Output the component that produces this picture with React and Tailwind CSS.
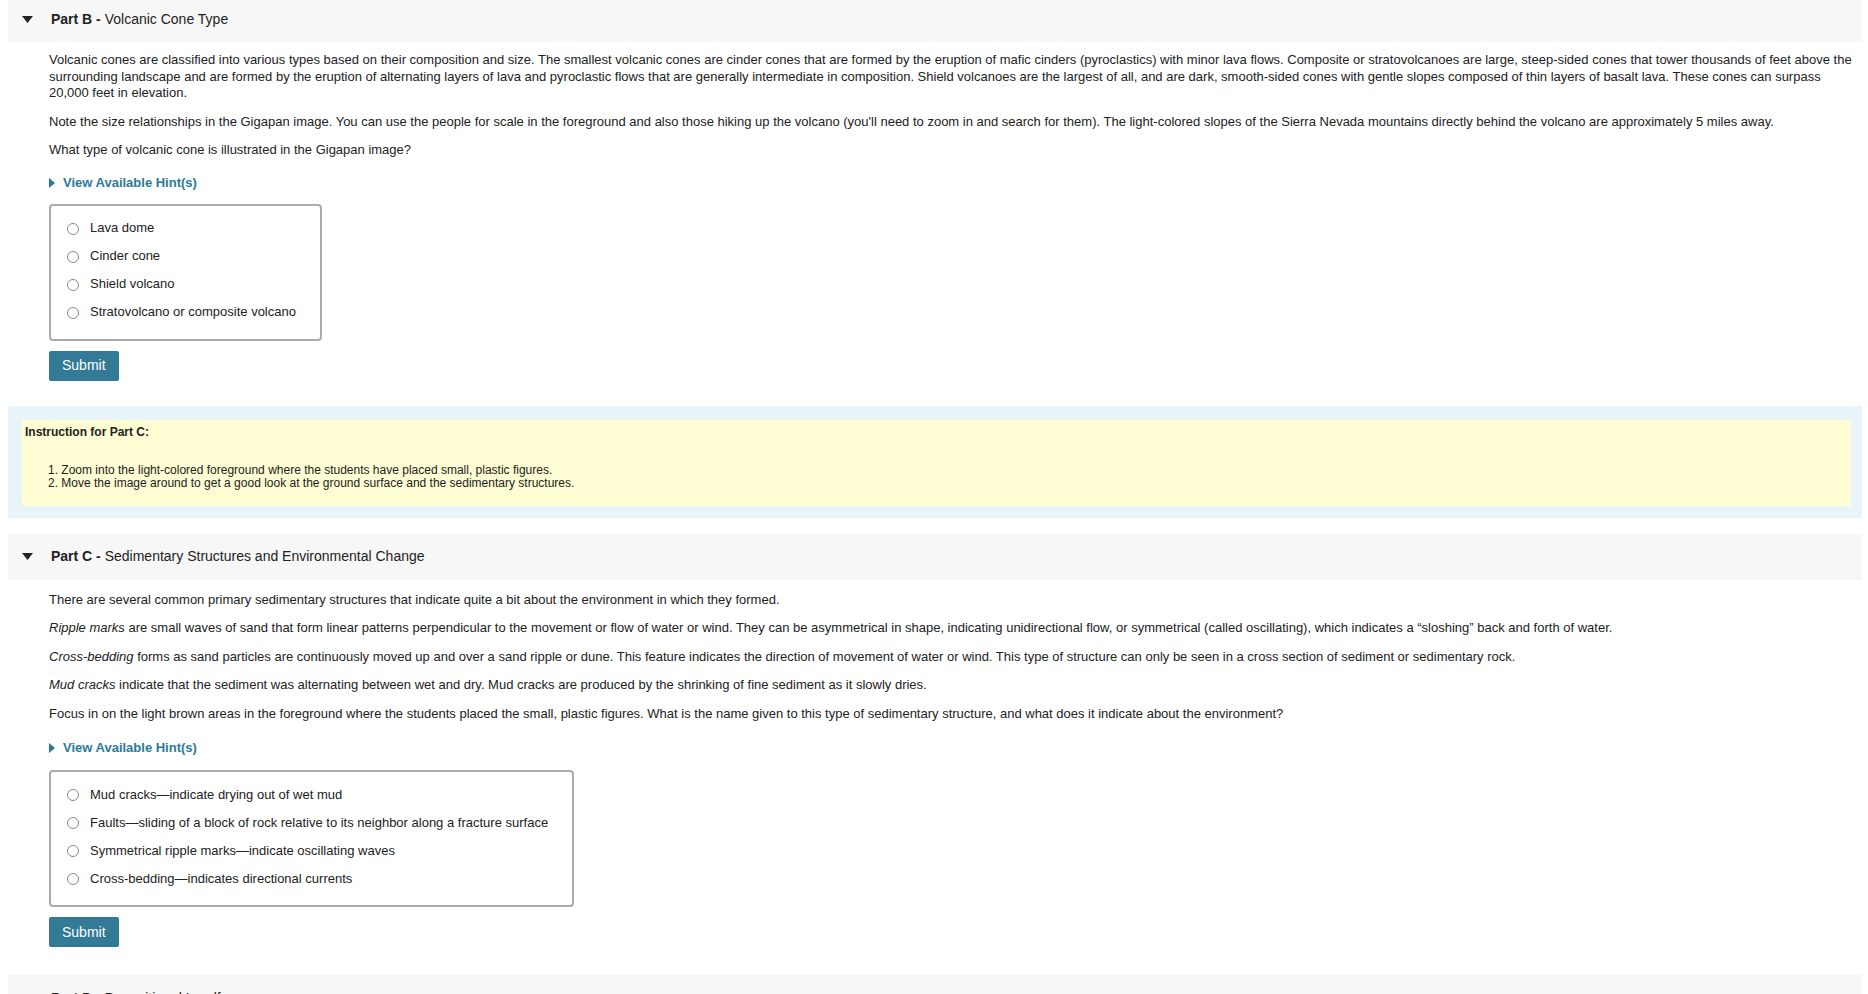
import React from 'react';

const partBOptions = [
    'Lava dome',
    'Cinder cone',
    'Shield volcano',
    'Stratovolcano or composite volcano',
];

const partCOptions = [
    'Mud cracks\u2014indicate drying out of wet mud',
    'Faults\u2014sliding of a block of rock relative to its neighbor along a fracture surface',
    'Symmetrical ripple marks\u2014indicate oscillating waves',
    'Cross-bedding\u2014indicates directional currents',
];

const Caret = () => (
    <svg width="11" height="7" viewBox="0 0 11 7" className="shrink-0">
        <polygon points="0,0 11,0 5.5,7" fill="#222" />
    </svg>
);

const PartHeader = ({ part, title }) => (
    <div className="h-[46px] bg-[#f7f7f7] flex items-center pl-[14px]">
        <Caret />
        <h2 className="ml-[18px] text-[14px] text-[#222]">
            <span className="font-bold">{part} - </span>
            {title}
        </h2>
    </div>
);

const HintToggle = ({ top = 'mt-[16px]' }) => (
    <button className={`${top} flex items-center gap-[8px] text-[13px] font-bold text-[#2c7a9a] leading-[16px]`}>
        <svg width="6" height="10" viewBox="0 0 6 10">
            <polygon points="0,0 6,5 0,10" fill="#2c7a9a" />
        </svg>
        View Available Hint(s)
    </button>
);

const Choices = ({ options, top = 'mt-[13px]' }) => (
    <div className={`${top} w-fit border-2 border-[#aaaaaa] rounded-[4px] pt-[9px] pb-[12px] pl-[16px] pr-[24px]`}>
        {options.map(opt => (
            <label key={opt} className="h-[28px] flex items-center gap-[11px] text-[13px] text-[#222] whitespace-nowrap">
                <span className="w-[12px] h-[12px] rounded-full border border-[#8a8a8a] bg-white shrink-0" />
                {opt}
            </label>
        ))}
    </div>
);

const SubmitButton = () => (
    <button className="mt-[10px] h-[30px] px-[13px] bg-[#337a96] text-white text-[14px] rounded-[2px]">
        Submit
    </button>
);

export default function App() {
    return (
        <div className="min-h-screen bg-white overflow-hidden font-['Liberation_Sans',Arial,sans-serif] text-[#222]">
            <div className="pl-[8px] pr-[6px] -mt-[4px]">
                {/* Part B */}
                <section>
                    <PartHeader part="Part B" title="Volcanic Cone Type" />
                    <div className="pl-[41px] pr-[10px] pt-[10px] text-[13px] leading-[16.5px]">
                        <p className="mb-[12px]">
                            Volcanic cones are classified into various types based on their composition and size. The smallest volcanic cones are cinder cones that are formed by the eruption of mafic cinders (pyroclastics) with minor lava flows. Composite or stratovolcanoes are large, steep-sided cones that tower thousands of feet above the surrounding landscape and are formed by the eruption of alternating layers of lava and pyroclastic flows that are generally intermediate in composition. Shield volcanoes are the largest of all, and are dark, smooth-sided cones with gentle slopes composed of thin layers of basalt lava. These cones can surpass 20,000 feet in elevation.
                        </p>
                        <p className="mb-[12px]">
                            Note the size relationships in the Gigapan image. You can use the people for scale in the foreground and also those hiking up the volcano (you'll need to zoom in and search for them). The light-colored slopes of the Sierra Nevada mountains directly behind the volcano are approximately 5 miles away.
                        </p>
                        <p>What type of volcanic cone is illustrated in the Gigapan image?</p>
                        <HintToggle />
                        <Choices options={partBOptions} />
                        <SubmitButton />
                    </div>
                </section>

                {/* Instruction for Part C */}
                <div className="mt-[25px] bg-[#e8f4f7] pt-[14px] pb-[12px] pl-[14px] pr-[11px]">
                    <div className="bg-[#fefdd3] pl-[3px] pt-[5px] pb-[16px] text-[12px] text-[#222]">
                        <p className="font-bold leading-[15px]">Instruction for Part C:</p>
                        <ol className="mt-[24px] pl-[23px] leading-[13px]">
                            <li>1. Zoom into the light-colored foreground where the students have placed small, plastic figures.</li>
                            <li>2. Move the image around to get a good look at the ground surface and the sedimentary structures.</li>
                        </ol>
                    </div>
                </div>

                {/* Part C */}
                <section className="mt-[16px]">
                    <PartHeader part="Part C" title="Sedimentary Structures and Environmental Change" />
                    <div className="pl-[41px] pr-[10px] pt-[12px] text-[13px] leading-[16.5px]">
                        <p className="mb-[12px]">
                            There are several common primary sedimentary structures that indicate quite a bit about the environment in which they formed.
                        </p>
                        <p className="mb-[12px]">
                            <em>Ripple marks</em> are small waves of sand that form linear patterns perpendicular to the movement or flow of water or wind. They can be asymmetrical in shape, indicating unidirectional flow, or symmetrical (called oscillating), which indicates a “sloshing” back and forth of water.
                        </p>
                        <p className="mb-[12px]">
                            <em>Cross-bedding</em> forms as sand particles are continuously moved up and over a sand ripple or dune. This feature indicates the direction of movement of water or wind. This type of structure can only be seen in a cross section of sediment or sedimentary rock.
                        </p>
                        <p className="mb-[12px]">
                            <em>Mud cracks</em> indicate that the sediment was alternating between wet and dry. Mud cracks are produced by the shrinking of fine sediment as it slowly dries.
                        </p>
                        <p>
                            Focus in on the light brown areas in the foreground where the students placed the small, plastic figures. What is the name given to this type of sedimentary structure, and what does it indicate about the environment?
                        </p>
                        <HintToggle top="mt-[18px]" />
                        <Choices options={partCOptions} top="mt-[14px]" />
                        <SubmitButton />
                    </div>
                </section>

                {/* Part D */}
                <section className="mt-[28px]">
                    <PartHeader part="Part D" title="Depositional Landforms" />
                </section>
            </div>
        </div>
    );
}
